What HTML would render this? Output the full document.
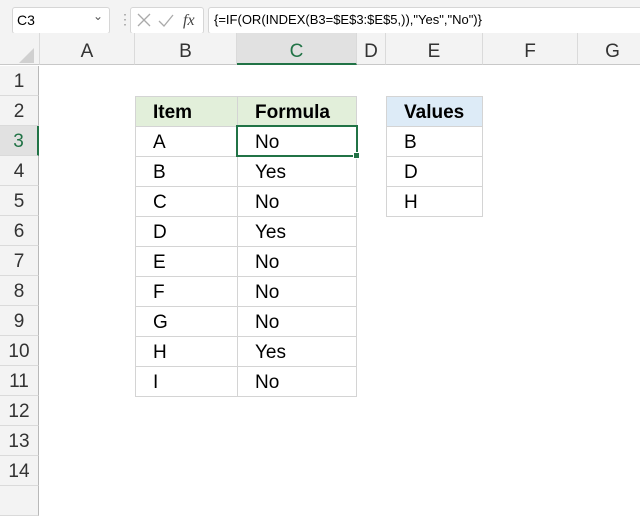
<!DOCTYPE html>
<html><head><style>
body{margin:0;width:640px;height:490px;overflow:hidden;background:#fff;font-family:"Liberation Sans",Arial,sans-serif;position:relative}
.a{position:absolute}
.top{left:0;top:0;width:640px;height:33px;background:#f3f3f3;border-bottom:1px solid #d4d4d4}
.box{background:#fff;border:1px solid #d6d6d6;border-radius:3px}
.ch{top:33px;height:32px;background:#f3f3f3;border-right:1px solid #dadada;border-bottom:1px solid #c8c8c8;font-size:19px;color:#333;text-align:center;line-height:37px;box-sizing:border-box}
.rh{left:0;width:39px;height:30px;background:#f3f3f3;border-bottom:1px solid #dadada;border-right:1px solid #b8b8b8;font-size:19px;color:#333;text-align:center;line-height:32px;box-sizing:border-box}
.c{height:31px;border:1px solid #d4d4d4;box-sizing:border-box;font-size:19px;line-height:32px;padding-left:17px;color:#000}
.h{font-weight:bold}
</style></head><body>
<div class="a top"></div>
<div class="a box" style="left:12px;top:7px;width:96px;height:25px"></div>
<div class="a" style="left:17px;top:12px;font-size:14px">C3</div>
<div class="a" style="left:93px;top:9px;font-size:12px;color:#555">&#8964;</div>
<div class="a" style="left:118px;top:11px;font-size:14px;color:#999">&#8942;</div>
<div class="a box" style="left:130px;top:7px;width:72px;height:25px"></div>
<svg class="a" style="left:136px;top:11px" width="66" height="18"><path d="M2 3l12 12M14 3L2 15" stroke="#aaa" stroke-width="1.3" fill="none"/><path d="M23 10l5 5 9-11" stroke="#aaa" stroke-width="1.3" fill="none"/><text x="47" y="14" font-family="Liberation Serif" font-style="italic" font-size="16" fill="#444">fx</text></svg>
<div class="a box" style="left:208px;top:7px;width:440px;height:25px"></div>
<div class="a" style="left:214px;top:12px;font-size:13px">{=IF(OR(INDEX(B3=$E$3:$E$5,)),"Yes","No")}</div>

<div class="a ch" style="left:0;width:40px"></div>
<svg class="a" style="left:18px;top:47px" width="18" height="18"><path d="M16 1V16H1Z" fill="#d0d0d0"/></svg>
<div class="a ch" style="left:40px;width:95px">A</div>
<div class="a ch" style="left:135px;width:102px">B</div>
<div class="a ch" style="left:237px;width:120px;background:#e1e1e1;color:#217346;border-bottom:2px solid #217346">C</div>
<div class="a ch" style="left:357px;width:29px">D</div>
<div class="a ch" style="left:386px;width:97px">E</div>
<div class="a ch" style="left:483px;width:95px">F</div>
<div class="a ch" style="left:578px;width:70px">G</div>

<div class="a rh" style="top:66px">1</div>
<div class="a rh" style="top:96px">2</div>
<div class="a rh" style="top:126px;background:#e1e1e1;color:#217346;border-right:2px solid #217346">3</div>
<div class="a rh" style="top:156px">4</div>
<div class="a rh" style="top:186px">5</div>
<div class="a rh" style="top:216px">6</div>
<div class="a rh" style="top:246px">7</div>
<div class="a rh" style="top:276px">8</div>
<div class="a rh" style="top:306px">9</div>
<div class="a rh" style="top:336px">10</div>
<div class="a rh" style="top:366px">11</div>
<div class="a rh" style="top:396px">12</div>
<div class="a rh" style="top:426px">13</div>
<div class="a rh" style="top:456px">14</div>
<div class="a rh" style="top:486px"></div>

<div class="a c h" style="left:135px;top:96px;width:103px;background:#e2efda">Item</div>
<div class="a c h" style="left:237px;top:96px;width:120px;background:#e2efda">Formula</div>
<div class="a c h" style="left:386px;top:96px;width:97px;background:#ddebf7">Values</div>

<div class="a c" style="left:135px;top:126px;width:103px">A</div><div class="a c" style="left:237px;top:126px;width:120px">No</div>
<div class="a c" style="left:135px;top:156px;width:103px">B</div><div class="a c" style="left:237px;top:156px;width:120px">Yes</div>
<div class="a c" style="left:135px;top:186px;width:103px">C</div><div class="a c" style="left:237px;top:186px;width:120px">No</div>
<div class="a c" style="left:135px;top:216px;width:103px">D</div><div class="a c" style="left:237px;top:216px;width:120px">Yes</div>
<div class="a c" style="left:135px;top:246px;width:103px">E</div><div class="a c" style="left:237px;top:246px;width:120px">No</div>
<div class="a c" style="left:135px;top:276px;width:103px">F</div><div class="a c" style="left:237px;top:276px;width:120px">No</div>
<div class="a c" style="left:135px;top:306px;width:103px">G</div><div class="a c" style="left:237px;top:306px;width:120px">No</div>
<div class="a c" style="left:135px;top:336px;width:103px">H</div><div class="a c" style="left:237px;top:336px;width:120px">Yes</div>
<div class="a c" style="left:135px;top:366px;width:103px">I</div><div class="a c" style="left:237px;top:366px;width:120px">No</div>

<div class="a c" style="left:386px;top:126px;width:97px">B</div>
<div class="a c" style="left:386px;top:156px;width:97px">D</div>
<div class="a c" style="left:386px;top:186px;width:97px">H</div>

<div class="a" style="left:236px;top:125px;width:118px;height:28px;border:2px solid #217346"></div>
<div class="a" style="left:353px;top:152px;width:5px;height:5px;background:#217346;border:1px solid #fff"></div>
</body></html>
